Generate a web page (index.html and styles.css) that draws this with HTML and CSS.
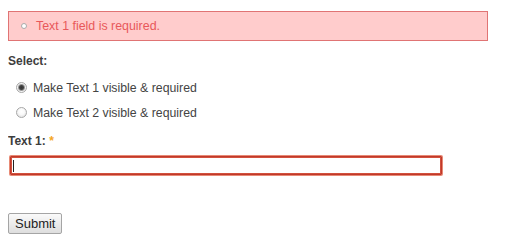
FILE: index.html
```html
<!DOCTYPE html>
<html>
<head>
  <meta charset="UTF-8">
  <title>Form</title>
  <link rel="stylesheet" href="styles.css">
</head>
<body>
  <div class="messages error">
    <ul>
      <li>Text 1 field is required.</li>
    </ul>
  </div>

  <form class="form">
    <div class="form-item">
      <label class="title">Select:</label>
      <div class="radios">
        <label class="option"><input type="radio" name="select" checked> Make Text 1 visible &amp; required</label>
        <label class="option"><input type="radio" name="select"> Make Text 2 visible &amp; required</label>
      </div>
    </div>

    <div class="form-item">
      <label class="title" for="text1">Text 1: <span class="form-required">*</span></label>
      <div class="field">
        <input type="text" id="text1" class="form-text error">
        <span class="caret"></span>
      </div>
    </div>

    <button type="button" class="form-submit">Submit</button>
  </form>
</body>
</html>
```

FILE: styles.css
```css
body {
  margin: 8px;
  font-family: "Liberation Sans", Arial, sans-serif;
  font-size: 12.3px;
  color: #444;
  background-color: #fff;
}
.messages {
  margin-top: 3px;
  width: 478px;
  height: 28px;
  background-color: #ffcccc;
  border: 1px solid #e07474;
  color: #e8585a;
  font-size: 12.4px;
  display: flex;
  align-items: center;
}
.messages ul {
  margin: 0;
  padding: 0 0 0 27px;
  list-style: none;
}
.messages li {
  position: relative;
}
.messages li::before {
  content: "";
  position: absolute;
  left: -15px;
  top: 4px;
  width: 4px;
  height: 4px;
  border: 1px solid #aaa;
  border-radius: 50%;
  background-color: #fff;
}
.form-item {
  margin-top: 13px;
}
.title {
  display: block;
  font-size: 12px;
  font-weight: bold;
  line-height: 15px;
  color: #3d3d3d;
}
.form-required {
  color: #f5a623;
}
.radios {
  margin-top: 6px;
}
.option {
  display: flex;
  align-items: center;
  height: 25px;
  padding-left: 8px;
  color: #444;
}
.option input {
  appearance: none;
  -webkit-appearance: none;
  width: 11px;
  height: 11px;
  margin: 0 6px 0 0;
  border: 1px solid #a8a8a8;
  border-radius: 50%;
  background: radial-gradient(circle at 50% 40%, #fff 0, #fafafa 40%, #d8d8d8 100%);
}
.option input:checked {
  background: radial-gradient(circle, #333 0, #444 2px, #999 3px, #f4f4f4 4px, #dcdcdc 100%);
}
.form-item + .form-item {
  margin-top: 9px;
}
.field {
  position: relative;
  margin: 7px 0 0 2px;
}
.form-text {
  box-sizing: border-box;
  width: 432px;
  height: 19px;
  margin: 0;
  padding: 0 3px;
  border: 1px solid #c0392b;
  border-radius: 1px;
  box-shadow: 0 0 0 1px #e88a75, inset 0 0 0 1px #d2503c;
  outline: none;
  font-family: inherit;
  font-size: 13px;
}
.caret {
  position: absolute;
  left: 3px;
  top: 4px;
  width: 1px;
  height: 12px;
  background-color: #222;
}
.form-submit {
  margin-top: 38px;
  height: 21px;
  padding: 0 6px;
  border: 1px solid #a5a5a5;
  border-radius: 2px;
  background: linear-gradient(#fafafa, #dedede);
  font-family: inherit;
  font-size: 13px;
  color: #222;
}
```
